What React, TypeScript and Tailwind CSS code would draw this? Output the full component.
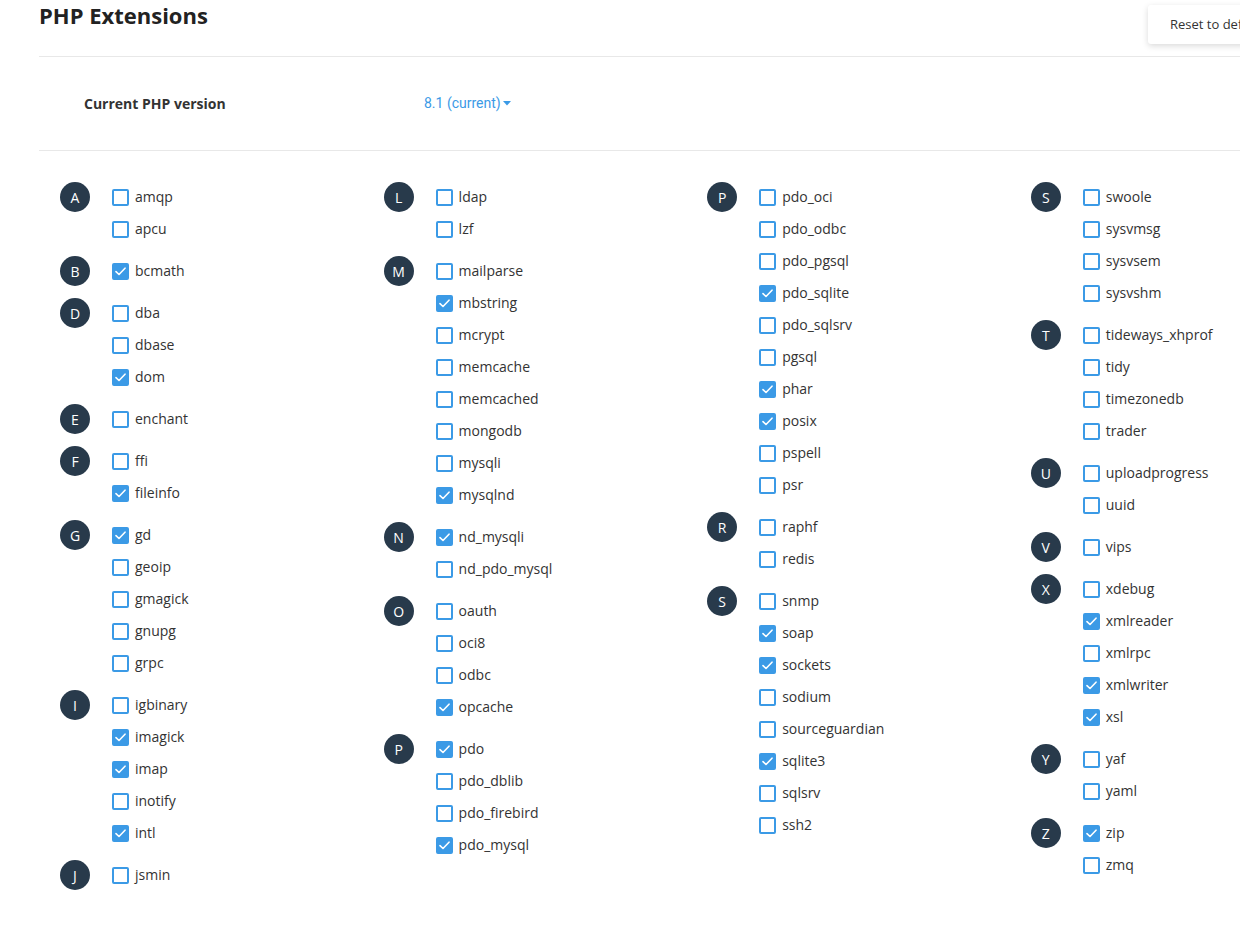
import { useState } from 'react';

type Group = { letter: string; items: [string, boolean][] };

const COLUMNS: Group[][] = [
  [
    { letter: 'A', items: [['amqp', false], ['apcu', false]] },
    { letter: 'B', items: [['bcmath', true]] },
    { letter: 'D', items: [['dba', false], ['dbase', false], ['dom', true]] },
    { letter: 'E', items: [['enchant', false]] },
    { letter: 'F', items: [['ffi', false], ['fileinfo', true]] },
    {
      letter: 'G',
      items: [['gd', true], ['geoip', false], ['gmagick', false], ['gnupg', false], ['grpc', false]],
    },
    {
      letter: 'I',
      items: [['igbinary', false], ['imagick', true], ['imap', true], ['inotify', false], ['intl', true]],
    },
    { letter: 'J', items: [['jsmin', false]] },
  ],
  [
    { letter: 'L', items: [['ldap', false], ['lzf', false]] },
    {
      letter: 'M',
      items: [
        ['mailparse', false],
        ['mbstring', true],
        ['mcrypt', false],
        ['memcache', false],
        ['memcached', false],
        ['mongodb', false],
        ['mysqli', false],
        ['mysqlnd', true],
      ],
    },
    { letter: 'N', items: [['nd_mysqli', true], ['nd_pdo_mysql', false]] },
    { letter: 'O', items: [['oauth', false], ['oci8', false], ['odbc', false], ['opcache', true]] },
    {
      letter: 'P',
      items: [['pdo', true], ['pdo_dblib', false], ['pdo_firebird', false], ['pdo_mysql', true]],
    },
  ],
  [
    {
      letter: 'P',
      items: [
        ['pdo_oci', false],
        ['pdo_odbc', false],
        ['pdo_pgsql', false],
        ['pdo_sqlite', true],
        ['pdo_sqlsrv', false],
        ['pgsql', false],
        ['phar', true],
        ['posix', true],
        ['pspell', false],
        ['psr', false],
      ],
    },
    { letter: 'R', items: [['raphf', false], ['redis', false]] },
    {
      letter: 'S',
      items: [
        ['snmp', false],
        ['soap', true],
        ['sockets', true],
        ['sodium', false],
        ['sourceguardian', false],
        ['sqlite3', true],
        ['sqlsrv', false],
        ['ssh2', false],
      ],
    },
  ],
  [
    {
      letter: 'S',
      items: [['swoole', false], ['sysvmsg', false], ['sysvsem', false], ['sysvshm', false]],
    },
    {
      letter: 'T',
      items: [['tideways_xhprof', false], ['tidy', false], ['timezonedb', false], ['trader', false]],
    },
    { letter: 'U', items: [['uploadprogress', false], ['uuid', false]] },
    { letter: 'V', items: [['vips', false]] },
    {
      letter: 'X',
      items: [['xdebug', false], ['xmlreader', true], ['xmlrpc', false], ['xmlwriter', true], ['xsl', true]],
    },
    { letter: 'Y', items: [['yaf', false], ['yaml', false]] },
    { letter: 'Z', items: [['zip', true], ['zmq', false]] },
  ],
];

function Checkbox({ checked, onToggle }: { checked: boolean; onToggle: () => void }) {
  return (
    <button
      type="button"
      onClick={onToggle}
      className={
        'w-[17px] h-[17px] rounded-[2px] border-2 border-[#3b9ae6] flex items-center justify-center shrink-0 ' +
        (checked ? 'bg-[#3b9ae6]' : 'bg-white')
      }
    >
      {checked && (
        <svg width="11" height="9" viewBox="0 0 11 9" fill="none">
          <path d="M1 4.6L4 7.5L10 1.2" stroke="white" strokeWidth="1.6" strokeLinecap="round" strokeLinejoin="round" />
        </svg>
      )}
    </button>
  );
}

function ExtGroup({ group }: { group: Group }) {
  const [state, setState] = useState(group.items.map(([, c]) => c));
  return (
    <div className="flex">
      <div className="w-[30px] h-[30px] mt-[1px] rounded-full bg-[#283a4b] text-white text-[14px] flex items-center justify-center shrink-0">
        {group.letter}
      </div>
      <div className="ml-[22px] flex flex-col">
        {group.items.map(([name], i) => (
          <label key={name} className="h-[32px] flex items-center gap-[6px] cursor-pointer">
            <Checkbox
              checked={state[i]}
              onToggle={() => setState((s) => s.map((v, j) => (j === i ? !v : v)))}
            />
            <span className="text-[14px] text-[#333] leading-none">{name}</span>
          </label>
        ))}
      </div>
    </div>
  );
}

export default function App() {
  return (
    <div
      className="w-[1240px] h-[928px] overflow-hidden bg-white"
      style={{ fontFamily: '"Open Sans", "Liberation Sans", sans-serif' }}
    >
      <div className="w-[1340px] pl-[39px]">
        <div className="flex items-start h-[56px]">
          <h1 className="w-[1109px] text-[22px] font-bold text-[#222] leading-[30px]">PHP Extensions</h1>
          <button className="mt-[5px] h-[39px] px-[22px] bg-white rounded-[3px] shadow-[0_2px_6px_rgba(0,0,0,0.15)] text-[13px] text-[#333] whitespace-nowrap">
            Reset to defaults
          </button>
        </div>
        <div className="border-t border-[#e8e8e8]" />
        <div className="h-[93px] flex items-center">
          <div className="w-[385px] pl-[45px] text-[14px] font-bold text-[#333]">Current PHP version</div>
          <button
            className="flex items-center gap-[2px] text-[14px] text-[#3b9ae6]"
            style={{ fontFamily: 'Roboto, "Liberation Sans", sans-serif' }}
          >
            8.1 (current)
            <svg width="8" height="5" viewBox="0 0 8 5">
              <path d="M0 0H8L4 4.5Z" fill="#3b9ae6" />
            </svg>
          </button>
        </div>
        <div className="border-t border-[#e8e8e8]" />
        <div className="grid grid-cols-[repeat(4,323.6px)] pl-[21px] pt-[30px]">
          {COLUMNS.map((col, ci) => (
            <div key={ci} className="flex flex-col gap-[10px]">
              {col.map((g) => (
                <ExtGroup key={g.letter + ci} group={g} />
              ))}
            </div>
          ))}
        </div>
      </div>
    </div>
  );
}
